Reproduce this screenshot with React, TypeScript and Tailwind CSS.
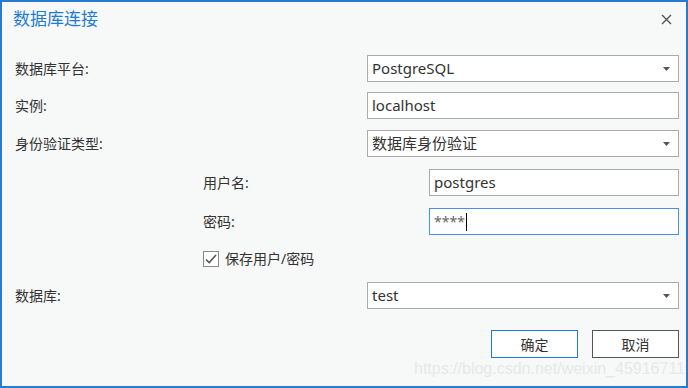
import React from "react";

const font = { fontFamily: '"Noto Sans", "Noto Sans CJK SC", sans-serif' };

function Caret() {
    return (
        <svg width="7" height="4" viewBox="0 0 7 4" className="absolute right-[8px] top-1/2 -translate-y-1/2">
            <path d="M0 0h7L3.5 4z" fill="#555" />
        </svg>
    );
}

function Field({ value, select, focused, width = "w-[312px]" }: { value: string; select?: boolean; focused?: boolean; width?: string }) {
    return (
        <div
            className={`relative ${width} h-[27px] bg-white border flex items-center pl-[4px] text-[15px] text-[#333] ${
                focused ? "border-[#4a90e2]" : "border-[#ababab]"
            }`}
        >
            <span className={`leading-none ${focused ? "text-[#666] text-[14px]" : ""}`}>{value}</span>
            {focused && <span className="w-px h-[18px] bg-black ml-px" />}
            {select && <Caret />}
        </div>
    );
}

export default function App() {
    return (
        <div style={font} className="w-[688px] h-[388px] bg-[#f7f8f8] border-2 border-[#2a7bd0] flex flex-col text-[#333] relative overflow-hidden">
            <div className="h-[34px] flex items-center justify-between pl-[11px] pr-[14px]">
                <span className="text-[17px] text-[#1e7bd1]">数据库连接</span>
                <svg width="11" height="11" viewBox="0 0 11 11">
                    <path d="M1 1l9 9M10 1l-9 9" stroke="#555" strokeWidth="1.4" />
                </svg>
            </div>

            <div className="flex flex-col pl-[13px] pr-[7px] pt-[19px] text-[14px]">
                <div className="flex items-center justify-between">
                    <span>数据库平台:</span>
                    <Field value="PostgreSQL" select />
                </div>
                <div className="flex items-center justify-between mt-[10px]">
                    <span>实例:</span>
                    <Field value="localhost" />
                </div>
                <div className="flex items-center justify-between mt-[11px]">
                    <span>身份验证类型:</span>
                    <Field value="数据库身份验证" select />
                </div>
                <div className="flex items-center justify-between mt-[12px] pl-[188px]">
                    <span>用户名:</span>
                    <Field value="postgres" width="w-[250px]" />
                </div>
                <div className="flex items-center justify-between mt-[12px] pl-[188px]">
                    <span>密码:</span>
                    <Field value="****" width="w-[250px]" focused />
                </div>
                <div className="flex items-center gap-[6px] mt-[13px] pl-[188px]">
                    <span className="w-[16px] h-[16px] border border-[#8a8a8a] bg-white flex items-center justify-center">
                        <svg width="12" height="10" viewBox="0 0 12 10">
                            <path d="M1 5.5l3.2 3L11 1" stroke="#555" strokeWidth="1.6" fill="none" />
                        </svg>
                    </span>
                    <span>保存用户/密码</span>
                </div>
                <div className="flex items-center justify-between mt-[13px]">
                    <span>数据库:</span>
                    <Field value="test" select />
                </div>
                <div className="flex justify-end gap-[14px] mt-[21px]">
                    <button className="w-[87px] h-[28px] bg-white border border-[#1e7bd1] text-[14px]">确定</button>
                    <button className="w-[87px] h-[28px] bg-white border border-[#555] text-[14px]">取消</button>
                </div>
            </div>

            <span
                className="absolute right-[1px] bottom-[8px] text-[16px] leading-[18px] text-[#e6e8e8]"
                style={{ fontFamily: '"Liberation Sans", Arial, sans-serif' }}
            >
                https://blog.csdn.net/weixin_45916711
            </span>
        </div>
    );
}
